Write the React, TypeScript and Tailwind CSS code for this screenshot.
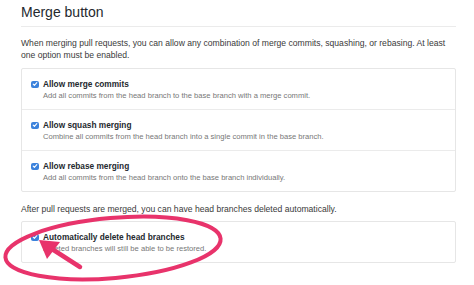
import React from "react";

type Option = {
  title: string;
  note: string;
};

const mergeOptions: Option[] = [
  {
    title: "Allow merge commits",
    note: "Add all commits from the head branch to the base branch with a merge commit.",
  },
  {
    title: "Allow squash merging",
    note: "Combine all commits from the head branch into a single commit in the base branch.",
  },
  {
    title: "Allow rebase merging",
    note: "Add all commits from the head branch onto the base branch individually.",
  },
];

const Checkbox = () => (
  <span className="mt-[2.5px] flex h-[7.5px] w-[7.5px] shrink-0 items-center justify-center rounded-[2px] bg-[#3b82dc]">
    <svg width="6" height="6" viewBox="0 0 6 6" fill="none">
      <path
        d="M1.2 3.1 L2.4 4.3 L4.8 1.6"
        stroke="white"
        strokeWidth="1.1"
        strokeLinecap="round"
        strokeLinejoin="round"
      />
    </svg>
  </span>
);

const OptionRow = ({ title, note, first }: Option & { first?: boolean }) => (
  <div
    className={`flex gap-[4.5px] pl-[9px] pr-2 pt-[9px] pb-[7px] ${
      first ? "" : "border-t border-[#ebebeb]"
    }`}
  >
    <Checkbox />
    <div className="flex flex-col">
      <span className="text-[8.3px] font-bold leading-[12px] text-[#24292e]">
        {title}
      </span>
      <span className="text-[7.6px] leading-[12px] text-[#777777]">{note}</span>
    </div>
  </div>
);

export default function App() {
  return (
    <div className="relative h-[285px] w-[474px] overflow-hidden bg-white font-['Liberation_Sans',Arial,sans-serif]">
      <div className="pl-[21px] pr-[18px] pt-[2px]">
        <h2 className="border-b border-[#ebebeb] pb-[4px] text-[14px] leading-[20px] text-[#24292e]">
          Merge button
        </h2>
        <p className="mt-[10px] text-[8.6px] leading-[12px] text-[#3a3a3a]">
          When merging pull requests, you can allow any combination of merge
          commits, squashing, or rebasing. At least
          <br />
          one option must be enabled.
        </p>

        <div className="mt-[7px] rounded-[2px] border border-[#e6e6e6]">
          {mergeOptions.map((opt, i) => (
            <OptionRow key={opt.title} {...opt} first={i === 0} />
          ))}
        </div>

        <p className="mt-[11px] text-[8.6px] leading-[12px] text-[#3a3a3a]">
          After pull requests are merged, you can have head branches deleted
          automatically.
        </p>

        <div className="mt-[6px] rounded-[2px] border border-[#e6e6e6]">
          <OptionRow
            first
            title="Automatically delete head branches"
            note="Deleted branches will still be able to be restored."
          />
        </div>
      </div>

      {/* hand-drawn annotation */}
      <svg
        className="pointer-events-none absolute left-0 top-0"
        width="474"
        height="285"
        viewBox="0 0 474 285"
      >
        <ellipse
          cx="113"
          cy="248"
          rx="108"
          ry="30"
          transform="rotate(-5 113 248)"
          fill="none"
          stroke="#e8336b"
          strokeWidth="4"
        />
        <line
          x1="80"
          y1="267"
          x2="52"
          y2="249"
          stroke="#e8336b"
          strokeWidth="4.5"
          strokeLinecap="round"
        />
        <polygon points="39,240 60,242 47,259" fill="#e8336b" />
      </svg>
    </div>
  );
}
